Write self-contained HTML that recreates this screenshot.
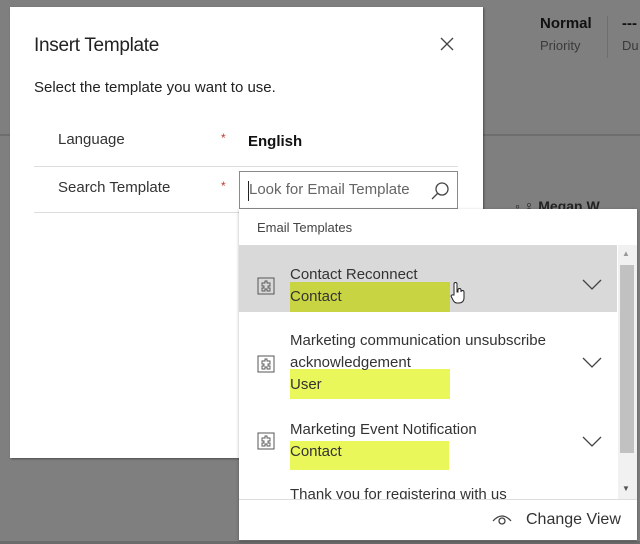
<!DOCTYPE html>
<html><head><style>
body{margin:0;width:640px;height:544px;background:#7f7f7f;position:relative;overflow:hidden;font-family:"Segoe UI","Liberation Sans",sans-serif;}
.a{position:absolute}
</style></head><body>
<div class="a" style="left:0;top:134px;width:640px;height:2px;background:#6e6e6e"></div>
<div class="a" style="left:0;top:541px;width:640px;height:3px;background:#6b6b6b"></div>
<div class="a" style="left:540px;top:15px;font-size:15px;font-weight:bold;color:#111">Normal</div>
<div class="a" style="left:540px;top:38px;font-size:13px;color:#3a3a3a">Priority</div>
<div class="a" style="left:607px;top:16px;width:1px;height:42px;background:#6e6e6e"></div>
<div class="a" style="left:622px;top:15px;font-size:15px;font-weight:bold;color:#111">---</div>
<div class="a" style="left:622px;top:38px;font-size:13px;color:#3a3a3a">Du</div>
<div class="a" style="left:515px;top:198px;font-size:14px;font-weight:bold;color:#222">◦ ♀ Megan W</div>
<div class="a" style="left:10px;top:7px;width:473px;height:451px;background:#fff;box-shadow:1px 1px 2px rgba(0,0,0,.4)">
<div class="a" style="left:24px;top:28px;font-size:19px;color:#222;letter-spacing:-0.3px">Insert Template</div>
<div class="a" style="left:24px;top:72px;font-size:15px;color:#222">Select the template you want to use.</div>
<div class="a" style="left:48px;top:124px;font-size:15px;color:#333">Language</div>
<div class="a" style="left:211px;top:124px;font-size:12px;color:#c0392b">*</div>
<div class="a" style="left:238px;top:126px;font-size:15px;font-weight:bold;color:#111">English</div>
<div class="a" style="left:24px;top:159px;width:424px;height:1px;background:#ddd"></div>
<div class="a" style="left:48px;top:172px;font-size:15px;color:#333">Search Template</div>
<div class="a" style="left:211px;top:172px;font-size:12px;color:#c0392b">*</div>
<div class="a" style="left:24px;top:205px;width:424px;height:1px;background:#ddd"></div>
</div>
<svg class="a" style="left:440px;top:37px" width="14" height="14"><path d="M1 1L13 13M13 1L1 13" stroke="#444" stroke-width="1.3"/></svg>
<div class="a" style="left:239px;top:171px;width:217px;height:36px;border:1px solid #8a8a8a;background:#fff">
<div class="a" style="left:8px;top:9px;width:1px;height:20px;background:#222"></div>
<div class="a" style="left:9px;top:9px;font-size:15px;color:#666">Look for Email Template</div>
<svg class="a" style="left:190px;top:9px" width="20" height="20"><circle cx="12" cy="8" r="6" fill="none" stroke="#444" stroke-width="1.3"/><path d="M8 12L2 18" stroke="#444" stroke-width="1.3"/></svg>
</div>
<div class="a" style="left:239px;top:209px;width:398px;height:331px;background:#fff;box-shadow:0 1px 3px rgba(0,0,0,.3)">
<div class="a" style="left:18px;top:11px;font-size:13px;color:#444">Email Templates</div>
<div class="a" style="left:0;top:36px;width:378px;height:67px;background:#d9d9d9"></div>
<div class="a" style="left:379px;top:36px;width:19px;height:255px;background:#f1f1f1"></div>
<div class="a" style="left:381px;top:56px;width:14px;height:188px;background:#c1c1c1"></div>
<div class="a" style="left:383px;top:40px;font-size:8px;color:#999">▲</div>
<div class="a" style="left:383px;top:275px;font-size:8px;color:#555">▼</div>
<div class="a" style="left:51px;top:73px;width:160px;height:30px;background:#c9d443"></div>
<div class="a" style="left:51px;top:160px;width:160px;height:30px;background:#eaf75a"></div>
<div class="a" style="left:51px;top:232px;width:159px;height:29px;background:#eaf75a"></div>
<div class="a" style="left:51px;top:55px;font-size:15px;color:#333;line-height:22px">Contact Reconnect<br>Contact</div>
<div class="a" style="left:51px;top:121px;font-size:15px;color:#333;line-height:22px">Marketing communication unsubscribe<br>acknowledgement<br>User</div>
<div class="a" style="left:51px;top:210px;font-size:15px;color:#333;line-height:22px">Marketing Event Notification<br>Contact</div>
<div class="a" style="left:51px;top:277px;font-size:15px;color:#333;height:14px;overflow:hidden">Thank you for registering with us</div>
<svg class="a" style="left:18px;top:68px" width="20" height="20"><rect x="1" y="1" width="16" height="16" fill="none" stroke="#555"/><path d="M5 6h3v-2h2v2h3v3h-2v2h2v3h-3v-2h-2v2h-3v-3h2v-2h-2z" fill="none" stroke="#555" stroke-width=".9"/></svg>
<svg class="a" style="left:18px;top:146px" width="20" height="20"><rect x="1" y="1" width="16" height="16" fill="none" stroke="#555"/><path d="M5 6h3v-2h2v2h3v3h-2v2h2v3h-3v-2h-2v2h-3v-3h2v-2h-2z" fill="none" stroke="#555" stroke-width=".9"/></svg>
<svg class="a" style="left:18px;top:223px" width="20" height="20"><rect x="1" y="1" width="16" height="16" fill="none" stroke="#555"/><path d="M5 6h3v-2h2v2h3v3h-2v2h2v3h-3v-2h-2v2h-3v-3h2v-2h-2z" fill="none" stroke="#555" stroke-width=".9"/></svg>
<svg class="a" style="left:343px;top:70px" width="20" height="12"><path d="M1 1L10 10L19 1" fill="none" stroke="#444" stroke-width="1.3"/></svg>
<svg class="a" style="left:343px;top:148px" width="20" height="12"><path d="M1 1L10 10L19 1" fill="none" stroke="#444" stroke-width="1.3"/></svg>
<svg class="a" style="left:343px;top:227px" width="20" height="12"><path d="M1 1L10 10L19 1" fill="none" stroke="#444" stroke-width="1.3"/></svg>
<div class="a" style="left:0;top:290px;width:398px;height:1px;background:#ddd"></div>
<svg class="a" style="left:252px;top:303px" width="22" height="14"><path d="M2 9Q11 -1 20 9" fill="none" stroke="#444" stroke-width="1.3"/><circle cx="11" cy="9" r="3" fill="none" stroke="#444" stroke-width="1.3"/></svg>
<div class="a" style="left:287px;top:302px;font-size:16px;color:#333">Change View</div>
</div>
<svg class="a" style="left:449px;top:281px" width="18" height="24"><path d="M5 14V3a1.5 1.5 0 013 0v8h1V9a1.5 1.5 0 013 0v2a1.5 1.5 0 013 0v6c0 3-2 5-5 5H8c-2 0-3-1-4-3l-2-4a1.5 1.5 0 012-1z" fill="#fff" stroke="#222"/></svg>
</body></html>
